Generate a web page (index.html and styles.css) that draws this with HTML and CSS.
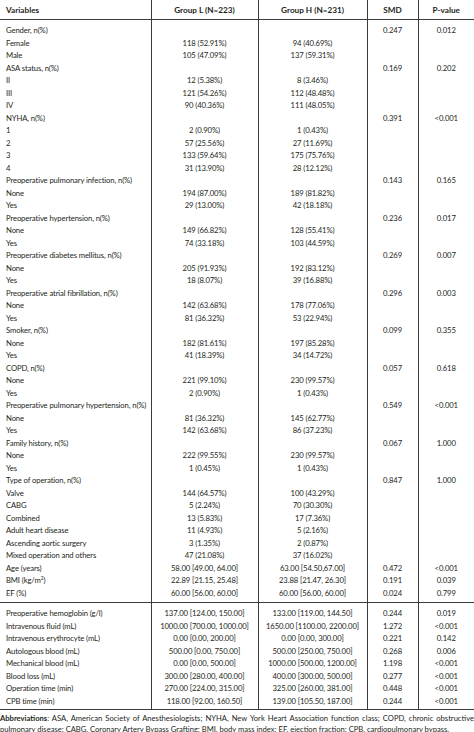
FILE: index.html
```html
<!DOCTYPE html>
<html>
<head>
<meta charset="utf-8">
<link rel="stylesheet" href="styles.css">
</head>
<body>
<table class="tbl">
<colgroup><col class="c1"><col class="c2"><col class="c3"><col class="c4"><col class="c5"></colgroup>
<thead>
<tr class="head"><th class="var">Variables</th><th>Group L (N=223)</th><th>Group H (N=231)</th><th>SMD</th><th>P-value</th></tr>
</thead>
<tbody class="sec1">
<tr class="first"><td>Gender, n(%)</td><td></td><td></td><td>0.247</td><td>0.012</td></tr>
<tr><td>Female</td><td>118 (52.91%)</td><td>94 (40.69%)</td><td></td><td></td></tr>
<tr><td>Male</td><td>105 (47.09%)</td><td>137 (59.31%)</td><td></td><td></td></tr>
<tr><td>ASA status, n(%)</td><td></td><td></td><td>0.169</td><td>0.202</td></tr>
<tr><td>II</td><td>12 (5.38%)</td><td>8 (3.46%)</td><td></td><td></td></tr>
<tr><td>III</td><td>121 (54.26%)</td><td>112 (48.48%)</td><td></td><td></td></tr>
<tr><td>IV</td><td>90 (40.36%)</td><td>111 (48.05%)</td><td></td><td></td></tr>
<tr><td>NYHA, n(%)</td><td></td><td></td><td>0.391</td><td>&lt;0.001</td></tr>
<tr><td>1</td><td>2 (0.90%)</td><td>1 (0.43%)</td><td></td><td></td></tr>
<tr><td>2</td><td>57 (25.56%)</td><td>27 (11.69%)</td><td></td><td></td></tr>
<tr><td>3</td><td>133 (59.64%)</td><td>175 (75.76%)</td><td></td><td></td></tr>
<tr><td>4</td><td>31 (13.90%)</td><td>28 (12.12%)</td><td></td><td></td></tr>
<tr><td>Preoperative pulmonary infection, n(%)</td><td></td><td></td><td>0.143</td><td>0.165</td></tr>
<tr><td>None</td><td>194 (87.00%)</td><td>189 (81.82%)</td><td></td><td></td></tr>
<tr><td>Yes</td><td>29 (13.00%)</td><td>42 (18.18%)</td><td></td><td></td></tr>
<tr><td>Preoperative hypertension, n(%)</td><td></td><td></td><td>0.236</td><td>0.017</td></tr>
<tr><td>None</td><td>149 (66.82%)</td><td>128 (55.41%)</td><td></td><td></td></tr>
<tr><td>Yes</td><td>74 (33.18%)</td><td>103 (44.59%)</td><td></td><td></td></tr>
<tr><td>Preoperative diabetes mellitus, n(%)</td><td></td><td></td><td>0.269</td><td>0.007</td></tr>
<tr><td>None</td><td>205 (91.93%)</td><td>192 (83.12%)</td><td></td><td></td></tr>
<tr><td>Yes</td><td>18 (8.07%)</td><td>39 (16.88%)</td><td></td><td></td></tr>
<tr><td>Preoperative atrial fibrillation, n(%)</td><td></td><td></td><td>0.296</td><td>0.003</td></tr>
<tr><td>None</td><td>142 (63.68%)</td><td>178 (77.06%)</td><td></td><td></td></tr>
<tr><td>Yes</td><td>81 (36.32%)</td><td>53 (22.94%)</td><td></td><td></td></tr>
<tr><td>Smoker, n(%)</td><td></td><td></td><td>0.099</td><td>0.355</td></tr>
<tr><td>None</td><td>182 (81.61%)</td><td>197 (85.28%)</td><td></td><td></td></tr>
<tr><td>Yes</td><td>41 (18.39%)</td><td>34 (14.72%)</td><td></td><td></td></tr>
<tr><td>COPD, n(%)</td><td></td><td></td><td>0.057</td><td>0.618</td></tr>
<tr><td>None</td><td>221 (99.10%)</td><td>230 (99.57%)</td><td></td><td></td></tr>
<tr><td>Yes</td><td>2 (0.90%)</td><td>1 (0.43%)</td><td></td><td></td></tr>
<tr><td>Preoperative pulmonary hypertension, n(%)</td><td></td><td></td><td>0.549</td><td>&lt;0.001</td></tr>
<tr><td>None</td><td>81 (36.32%)</td><td>145 (62.77%)</td><td></td><td></td></tr>
<tr><td>Yes</td><td>142 (63.68%)</td><td>86 (37.23%)</td><td></td><td></td></tr>
<tr><td>Family history, n(%)</td><td></td><td></td><td>0.067</td><td>1.000</td></tr>
<tr><td>None</td><td>222 (99.55%)</td><td>230 (99.57%)</td><td></td><td></td></tr>
<tr><td>Yes</td><td>1 (0.45%)</td><td>1 (0.43%)</td><td></td><td></td></tr>
<tr><td>Type of operation, n(%)</td><td></td><td></td><td>0.847</td><td>1.000</td></tr>
<tr><td>Valve</td><td>144 (64.57%)</td><td>100 (43.29%)</td><td></td><td></td></tr>
<tr><td>CABG</td><td>5 (2.24%)</td><td>70 (30.30%)</td><td></td><td></td></tr>
<tr><td>Combined</td><td>13 (5.83%)</td><td>17 (7.36%)</td><td></td><td></td></tr>
<tr><td>Adult heart disease</td><td>11 (4.93%)</td><td>5 (2.16%)</td><td></td><td></td></tr>
<tr><td>Ascending aortic surgery</td><td>3 (1.35%)</td><td>2 (0.87%)</td><td></td><td></td></tr>
<tr><td>Mixed operation and others</td><td>47 (21.08%)</td><td>37 (16.02%)</td><td></td><td></td></tr>
<tr><td>Age (years)</td><td>58.00 [49.00, 64.00]</td><td>63.00 [54.50,67.00]</td><td>0.472</td><td>&lt;0.001</td></tr>
<tr><td>BMI (kg/m<sup>2</sup>)</td><td>22.89 [21.15, 25.48]</td><td>23.88 [21.47, 26.30]</td><td>0.191</td><td>0.039</td></tr>
<tr class="last"><td>EF (%)</td><td>60.00 [56.00, 60.00]</td><td>60.00 [56.00, 60.00]</td><td>0.024</td><td>0.799</td></tr>
</tbody>
<tbody class="sec2">
<tr class="first"><td>Preoperative hemoglobin (g/l)</td><td>137.00 [124.00, 150.00]</td><td>133.00 [119.00, 144.50]</td><td>0.244</td><td>0.019</td></tr>
<tr><td>Intravenous fluid (mL)</td><td>1000.00 [700.00, 1000.00]</td><td>1650.00 [1100.00, 2200.00]</td><td>1.272</td><td>&lt;0.001</td></tr>
<tr><td>Intravenous erythrocyte (mL)</td><td>0.00 [0.00, 200.00]</td><td>0.00 [0.00, 300.00]</td><td>0.221</td><td>0.142</td></tr>
<tr><td>Autologous blood (mL)</td><td>500.00 [0.00, 750.00]</td><td>500.00 [250.00, 750.00]</td><td>0.268</td><td>0.006</td></tr>
<tr><td>Mechanical blood (mL)</td><td>0.00 [0.00, 500.00]</td><td>1000.00 [500.00, 1200.00]</td><td>1.198</td><td>&lt;0.001</td></tr>
<tr><td>Blood loss (mL)</td><td>300.00 [280.00, 400.00]</td><td>400.00 [300.00, 500.00]</td><td>0.277</td><td>&lt;0.001</td></tr>
<tr><td>Operation time (min)</td><td>270.00 [224.00, 315.00]</td><td>325.00 [260.00, 381.00]</td><td>0.448</td><td>&lt;0.001</td></tr>
<tr class="last"><td>CPB time (min)</td><td>118.00 [92.00, 160.50]</td><td>139.00 [105.50, 187.00]</td><td>0.244</td><td>&lt;0.001</td></tr>
</tbody>
</table>
<div class="notes">
<p class="line1"><b>Abbreviations</b>: ASA, American Society of Anesthesiologists; NYHA, New York Heart Association function class; COPD, chronic obstructive</p>
<p class="line2">pulmonary disease; CABG, Coronary Artery Bypass Grafting; BMI, body mass index; EF, ejection fraction; CPB, cardiopulmonary bypass.</p>
</div>
</body>
</html>
```
FILE: styles.css
```css
html, body {
  margin: 0;
  padding: 0;
  background: #fff;
}
body {
  width: 474px;
  height: 732px;
  overflow: hidden;
  font-family: Lato, "Open Sans", sans-serif;
  color: #231f20;
}
.tbl {
  width: 474px;
  border-collapse: collapse;
  table-layout: fixed;
  font-size: 7.7px;
  letter-spacing: -0.12px;
}
.c1 { width: 151px; }
.c2 { width: 107px; }
.c3 { width: 109px; }
.c4 { width: 51px; }
.c5 { width: 56px; }
.tbl th,
.tbl td {
  padding: 0;
  text-align: center;
  white-space: nowrap;
  border-left: 1px solid #3a3a3a;
  vertical-align: middle;
}
.tbl th:first-child,
.tbl td:first-child {
  border-left: none;
  text-align: left;
  padding-left: 6px;
}
.head th {
  height: 19px;
  font-weight: 700;
  font-size: 8.2px;
  letter-spacing: 0;
  border-bottom: 1px solid #3a3a3a;
}
.tbl td {
  height: 12.5px;
  line-height: 12.5px;
}
.sec1 .first td { padding-top: 4px; }
.sec1 .last td { padding-bottom: 3px; }
.sec1 { border-bottom: 1px solid #3a3a3a; }
.sec2 .first td { padding-top: 4px; }
.sec2 .last td { padding-bottom: 2px; }
.sec2 { border-bottom: 1px solid #3a3a3a; }
sup {
  font-size: 5px;
  line-height: 0;
  vertical-align: 3px;
}
.notes {
  font-size: 7.6px;
  line-height: 10.5px;
  padding-top: 3px;
}
.notes p { margin: 0; white-space: nowrap; }
.line1 {
  text-align: justify;
  text-align-last: justify;
}
```
